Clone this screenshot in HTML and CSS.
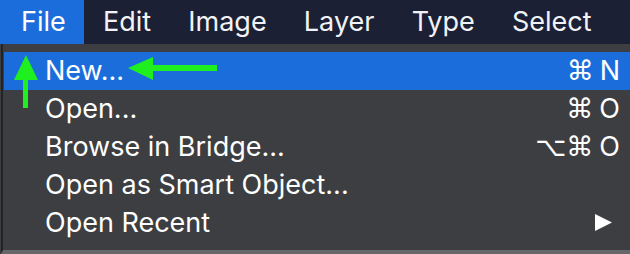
FILE: index.html
```html
<!DOCTYPE html>
<html>
<head>
<meta charset="utf-8">
<link rel="stylesheet" href="styles.css">
</head>
<body>
<div class="screen">
  <nav class="menubar">
    <span class="top-item active first">File</span>
    <span class="top-item">Edit</span>
    <span class="top-item">Image</span>
    <span class="top-item">Layer</span>
    <span class="top-item">Type</span>
    <span class="top-item">Select</span>
  </nav>
  <div class="menu">
    <div class="row selected"><span class="label">New...</span><span class="key">⌘<span class="ch">N</span></span></div>
    <div class="row"><span class="label">Open...</span><span class="key">⌘<span class="ch">O</span></span></div>
    <div class="row"><span class="label">Browse in Bridge...</span><span class="key">⌥⌘<span class="ch">O</span></span></div>
    <div class="row"><span class="label">Open as Smart Object...</span><span class="key"></span></div>
    <div class="row"><span class="label">Open Recent</span><span class="key"><svg class="tri" width="18" height="17" viewBox="0 0 18 17"><polygon points="0,0 17,8.5 0,17" fill="#ffffff"/></svg></span></div>
  </div>
  <svg class="annot" width="630" height="254" viewBox="0 0 630 254">
    <polygon points="26,55 14,80 38,80" fill="#1fee1f"/>
    <rect x="23" y="79" width="5" height="29" fill="#1fee1f"/>
    <polygon points="128,68 153,57 153,80" fill="#1fee1f"/>
    <rect x="152" y="65" width="65" height="6" fill="#1fee1f"/>
  </svg>
</div>
</body>
</html>
```

FILE: styles.css
```css
html, body {
  margin: 0;
  padding: 0;
}
body {
  width: 630px;
  height: 254px;
  overflow: hidden;
  background: #3c3d40;
  font-family: "Inter", "Liberation Sans", sans-serif;
  color: #ffffff;
}
.screen {
  position: relative;
  width: 630px;
  height: 254px;
  display: flex;
  flex-direction: column;
}
.menubar {
  height: 44px;
  background: #1c2034;
  display: flex;
  align-items: stretch;
  flex-shrink: 0;
}
.top-item {
  display: flex;
  align-items: center;
  padding: 0 18.6px 1px 18.6px;
  font-size: 27px;
  color: #f2f3f6;
}
.top-item.first {
  padding-left: 21px;
}
.top-item.active {
  background: #1b6ddc;
  color: #ffffff;
}
.menu {
  flex: 1;
  margin-left: 1px;
  border-left: 2px solid #222325;
  background: #3d3e41;
  padding: 8px 0 0 0;
  border-bottom: 4px solid #66676a;
  box-sizing: border-box;
  height: 210px;
}
.row {
  height: 38px;
  display: flex;
  align-items: center;
  justify-content: space-between;
  padding: 0 10px 2px 41px;
  box-sizing: border-box;
  font-size: 27px;
  margin-left: 1px;
}
.row.selected {
  background: #1b6ddc;
}
.key {
  display: flex;
  align-items: center;
  font-size: 27px;
  font-family: "DejaVu Sans", sans-serif;
}
.key .ch {
  font-family: "Inter", "Liberation Sans", sans-serif;
  font-size: 27px;
  margin-left: 6px;
}
.tri {
  display: block;
  margin-right: 7px;
}
.annot {
  position: absolute;
  left: 0;
  top: 0;
}
```
